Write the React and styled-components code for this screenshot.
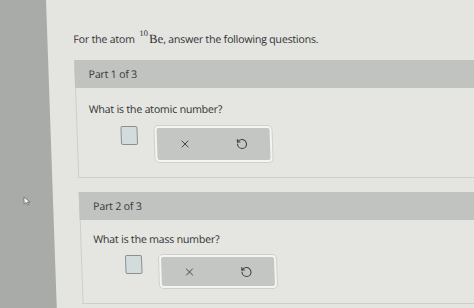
import React from "react";
import styled, { createGlobalStyle } from "styled-components";
import { X, RotateCcw } from "lucide-react";

const Global = createGlobalStyle`
  html, body { margin: 0; padding: 0; background: #a8aba8; }
  body { width: 474px; height: 308px; overflow: hidden; }
  #root { width: 474px; height: 308px; overflow: hidden; }
`;

const Page = styled.div`
  position: relative;
  display: flex;
  width: 520px;
  height: 330px;
  transform: skewX(2deg);
  transform-origin: 0 0;
  font-family: "Open Sans", "Liberation Sans", sans-serif;
  color: #2f3232;
  letter-spacing: -0.2px;
`;

const Sidebar = styled.div`
  flex: 0 0 46px;
  background: #a8aba8;
`;

const Main = styled.div`
  flex: 1;
  background: #e4e4e1;
  padding: 27px 0 0 26px;
  display: flex;
  flex-direction: column;
`;

const Title = styled.div`
  font-size: 10.6px;
  line-height: 16px;
  height: 16px;
`;

const Iso = styled.span`
  font-family: "Liberation Serif", "DejaVu Serif", serif;
  font-size: 12.5px;
  margin-left: 5px;
  letter-spacing: 0;
  sup {
    font-size: 8.5px;
    position: relative;
    top: -2px;
    margin-right: 1px;
  }
`;

const Panel = styled.section`
  margin-top: ${(p) => p.$top}px;
  border: 1px solid #cdcdca;
  border-top: none;
  background: #e5e5e2;
`;

const PanelHeader = styled.div`
  height: 28px;
  margin: 0 -1px;
  background: #c1c3c0;
  display: flex;
  align-items: center;
  padding-left: 14px;
  font-size: 10.6px;
  color: #363938;
`;

const PanelBody = styled.div`
  padding: ${(p) => p.$pt}px 12px ${(p) => p.$pb}px;
  display: flex;
  flex-direction: column;
`;

const Question = styled.div`
  font-size: 10.6px;
  line-height: 14px;
`;

const AnswerRow = styled.div`
  display: flex;
  align-items: flex-start;
  margin-top: ${(p) => p.$gap}px;
  margin-left: 31px;
  gap: 17px;
`;

const Check = styled.div`
  width: 15px;
  height: 17px;
  border: 1px solid #8a9090;
  border-radius: 2px;
  background: #d3dcdd;
`;

const ButtonGroup = styled.div`
  width: 113px;
  height: ${(p) => p.$h}px;
  border: 2px solid #f4f4f2;
  border-radius: 4px;
  background: #c4c6c3;
  box-shadow: 0 0 0 1px #cfd0cd;
  display: flex;
`;

const IconBtn = styled.div`
  flex: 1;
  display: flex;
  align-items: center;
  justify-content: center;
  color: #3f4242;
`;

const Cursor = styled.svg`
  position: absolute;
  left: 16px;
  top: 196px;
`;

function Part({ top, label, question, pt, pb, gap, h }) {
  return (
    <Panel $top={top}>
      <PanelHeader>{label}</PanelHeader>
      <PanelBody $pt={pt} $pb={pb}>
        <Question>{question}</Question>
        <AnswerRow $gap={gap}>
          <Check />
          <ButtonGroup $h={h}>
            <IconBtn>
              <X size={12} strokeWidth={1.9} />
            </IconBtn>
            <IconBtn>
              <RotateCcw size={12} strokeWidth={2.2} />
            </IconBtn>
          </ButtonGroup>
        </AnswerRow>
      </PanelBody>
    </Panel>
  );
}

export default function App() {
  return (
    <>
      <Global />
      <Page>
        <Sidebar />
        <Main>
          <Title>
            For the atom
            <Iso>
              <sup>10</sup>Be
            </Iso>
            , answer the following questions.
          </Title>
          <Part
            top={17}
            label="Part 1 of 3"
            question="What is the atomic number?"
            pt={14}
            pb={15}
            gap={10}
            h={32}
          />
          <Part
            top={14}
            label="Part 2 of 3"
            question="What is the mass number?"
            pt={12}
            pb={15}
            gap={9}
            h={29}
          />
        </Main>
        <Cursor width="8" height="10" viewBox="0 0 8 10">
          <path d="M1 1 L1 8 L3 6.5 L4.5 9 L5.5 8.5 L4.3 6 L7 6 Z" fill="#f4f4f4" stroke="#6a6d6b" strokeWidth="0.8" />
        </Cursor>
      </Page>
    </>
  );
}
